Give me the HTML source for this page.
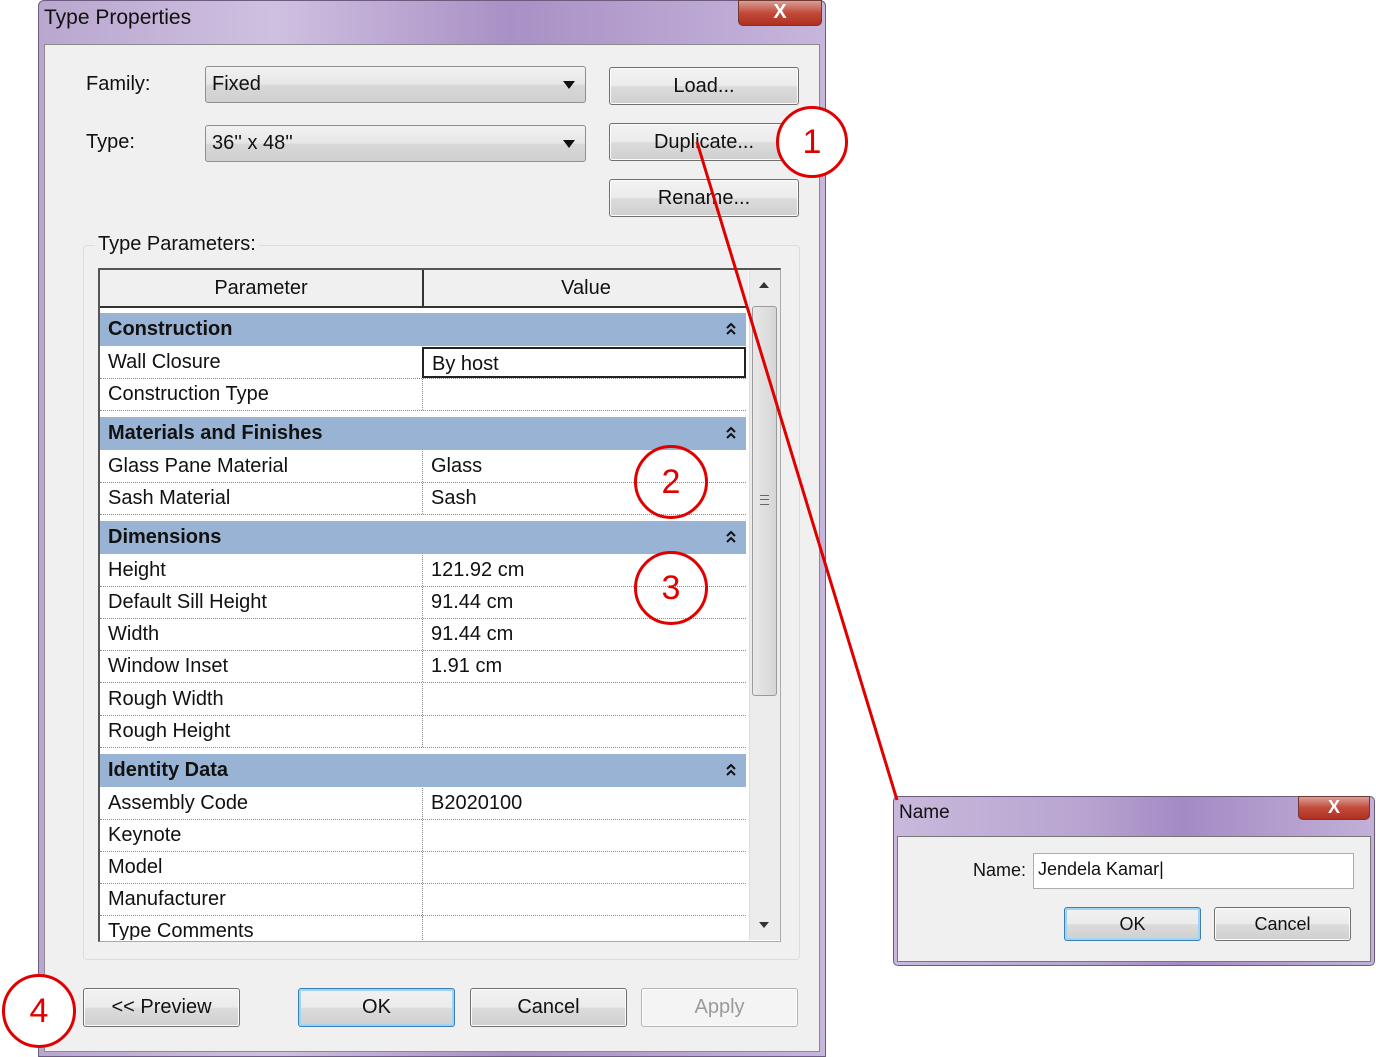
<!DOCTYPE html>
<html><head><meta charset="utf-8"><style>
*{margin:0;padding:0;box-sizing:border-box}
body{width:1376px;height:1057px;background:#fff;position:relative;overflow:hidden;font-family:"Liberation Sans Narrow","Liberation Sans",sans-serif;color:#111}
.a{position:absolute}
.t{font-size:20px;white-space:nowrap}
.btn{position:absolute;border:1px solid #707070;border-radius:3px;background:linear-gradient(#f2f2f2,#ebebeb 50%,#dcdcdc 51%,#cfcfcf);font-size:20px;text-align:center;box-shadow:inset 0 0 0 1px #fcfcfc}
.combo{position:absolute;border:1px solid #8e8f8f;border-radius:3px;background:linear-gradient(#f2f2f2,#e6e6e6 50%,#d8d8d8 51%,#d0d0d0);font-size:20px;padding-left:6px}
.combo:after{content:"";position:absolute;right:10px;top:14px;border-left:6px solid transparent;border-right:6px solid transparent;border-top:8px solid #111}
.circ{position:absolute;border:3px solid #e00000;border-radius:50%;background:#fff;color:#e00000;font-size:34px;text-align:center}
.grp{position:absolute;left:100px;width:646px;height:33px;background:#98b3d3;font-weight:bold;font-size:20px;padding-left:8px;line-height:33px}
.grp svg{position:absolute;right:10px;top:9px}
.row{position:absolute;left:100px;width:646px;height:32px;border-bottom:1px dotted #888;font-size:20px;line-height:31px}
.row span{position:absolute;left:8px}
.row b{position:absolute;left:322px;top:0;bottom:0;border-left:1px dotted #888;font-weight:normal;padding-left:8px}
</style></head><body>
<div class="a" style="left:38px;top:0;width:788px;height:1057px;background:linear-gradient(90deg,#b9a7cf,#cfc0e0 30%,#a990c5 60%,#c7b6dc);border:1px solid #6b5c80;border-radius:6px 6px 0 0"></div>
<div class="a t" style="left:44px;top:6px;font-size:21px">Type Properties</div>
<div class="a" style="left:738px;top:0;width:84px;height:26px;background:linear-gradient(#d99f96,#c24a3a 50%,#b03020);border:1px solid #6e3a32;border-radius:0 0 5px 5px;color:#fff;font-weight:bold;font-size:20px;text-align:center;line-height:22px">X</div>
<div class="a" style="left:44px;top:44px;width:776px;height:1008px;background:#f0f0f0;border:1px solid #8a8a8a"></div>

<div class="a t" style="left:86px;top:73px">Family:</div>
<div class="a t" style="left:86px;top:131px">Type:</div>
<div class="combo" style="left:205px;top:66px;width:381px;height:37px;line-height:35px">Fixed</div>
<div class="combo" style="left:205px;top:125px;width:381px;height:37px;line-height:35px">36'' x 48''</div>
<div class="btn" style="left:609px;top:67px;width:190px;height:38px;line-height:36px">Load...</div>
<div class="btn" style="left:609px;top:123px;width:190px;height:38px;line-height:36px">Duplicate...</div>
<div class="btn" style="left:609px;top:179px;width:190px;height:38px;line-height:36px">Rename...</div>

<div class="a" style="left:83px;top:245px;width:717px;height:715px;border:1px solid #dcdcdc;border-radius:4px"></div>
<div class="a t" style="left:95px;top:233px;background:#f0f0f0;padding:0 3px">Type Parameters:</div>

<div class="a" style="left:98px;top:268px;width:683px;height:674px;background:#fff;border:2px solid #555;border-right:1px solid #aaa;border-bottom:1px solid #aaa"></div>
<div class="a" style="left:100px;top:270px;width:648px;height:38px;background:#f0f0f0;border-bottom:2px solid #333"></div>
<div class="a" style="left:422px;top:270px;width:2px;height:38px;background:#333"></div>
<div class="a t" style="left:100px;top:277px;width:322px;text-align:center">Parameter</div>
<div class="a t" style="left:424px;top:277px;width:324px;text-align:center">Value</div>
<div class="a" style="left:749px;top:270px;width:31px;height:670px;background:#ececec;border-left:1px solid #ddd"></div>
<div class="a" style="left:752px;top:306px;width:25px;height:390px;background:linear-gradient(90deg,#e8e8e8,#d6d6d6);border:1px solid #9a9a9a;border-radius:3px"></div>
<div class="a" style="left:759px;top:282px;border-left:5px solid transparent;border-right:5px solid transparent;border-bottom:6px solid #333"></div>
<div class="a" style="left:759px;top:922px;border-left:5px solid transparent;border-right:5px solid transparent;border-top:6px solid #333"></div>
<div class="a" style="left:760px;top:495px;width:9px;height:10px;border-top:1px solid #666;border-bottom:1px solid #666"></div>
<div class="a" style="left:760px;top:499px;width:9px;height:1px;background:#666"></div>

<div class="grp" style="top:313px">Construction<svg width="10" height="14"><path d="M1 6L5 2L9 6M1 12L5 8L9 12" fill="none" stroke="#111" stroke-width="2"/></svg></div>
<div class="row" style="top:347px"><span>Wall Closure</span><b style="border:2px solid #222;right:0;background:#fff">By host</b></div>
<div class="row" style="top:379px"><span>Construction Type</span><b></b></div>
<div class="grp" style="top:417px">Materials and Finishes<svg width="10" height="14"><path d="M1 6L5 2L9 6M1 12L5 8L9 12" fill="none" stroke="#111" stroke-width="2"/></svg></div>
<div class="row" style="top:451px"><span>Glass Pane Material</span><b>Glass</b></div>
<div class="row" style="top:483px"><span>Sash Material</span><b>Sash</b></div>
<div class="grp" style="top:521px">Dimensions<svg width="10" height="14"><path d="M1 6L5 2L9 6M1 12L5 8L9 12" fill="none" stroke="#111" stroke-width="2"/></svg></div>
<div class="row" style="top:555px"><span>Height</span><b>121.92 cm</b></div>
<div class="row" style="top:587px"><span>Default Sill Height</span><b>91.44 cm</b></div>
<div class="row" style="top:619px"><span>Width</span><b>91.44 cm</b></div>
<div class="row" style="top:651px"><span>Window Inset</span><b>1.91 cm</b></div>
<div class="row" style="top:684px"><span>Rough Width</span><b></b></div>
<div class="row" style="top:716px"><span>Rough Height</span><b></b></div>
<div class="grp" style="top:754px">Identity Data<svg width="10" height="14"><path d="M1 6L5 2L9 6M1 12L5 8L9 12" fill="none" stroke="#111" stroke-width="2"/></svg></div>
<div class="row" style="top:788px"><span>Assembly Code</span><b>B2020100</b></div>
<div class="row" style="top:820px"><span>Keynote</span><b></b></div>
<div class="row" style="top:852px"><span>Model</span><b></b></div>
<div class="row" style="top:884px"><span>Manufacturer</span><b></b></div>
<div class="row" style="top:916px;height:24px;overflow:hidden;border:0"><span>Type Comments</span><b></b></div>

<div class="btn" style="left:83px;top:988px;width:157px;height:39px;line-height:37px">&lt;&lt; Preview</div>
<div class="btn" style="left:298px;top:988px;width:157px;height:39px;line-height:37px;border-color:#3c7fb1;box-shadow:inset 0 0 0 2px #9fd4f4">OK</div>
<div class="btn" style="left:470px;top:988px;width:157px;height:39px;line-height:37px">Cancel</div>
<div class="btn" style="left:641px;top:988px;width:157px;height:39px;line-height:37px;color:#9a9a9a;border-color:#b5b5b5;background:#f4f4f4">Apply</div>

<div class="a" style="left:893px;top:796px;width:482px;height:170px;background:linear-gradient(90deg,#c8b9dc,#b8a4d0 40%,#a48ac4 60%,#c2b0d8);border:1px solid #6b5c80;border-radius:5px"></div>
<div class="a t" style="left:899px;top:802px;font-size:19px">Name</div>
<div class="a" style="left:1298px;top:796px;width:72px;height:24px;background:linear-gradient(#d99f96,#c24a3a 50%,#b03020);border:1px solid #6e3a32;border-radius:0 0 5px 5px;color:#fff;font-weight:bold;font-size:18px;text-align:center;line-height:20px">X</div>
<div class="a" style="left:897px;top:836px;width:474px;height:126px;background:#f0f0f0;border:1px solid #777"></div>
<div class="a t" style="left:973px;top:860px;font-size:18px">Name:</div>
<div class="a" style="left:1033px;top:853px;width:321px;height:36px;background:#fff;border:1px solid #abadb3;font-size:18px;padding:5px 4px">Jendela Kamar|</div>
<div class="btn" style="left:1064px;top:907px;width:137px;height:34px;line-height:32px;font-size:18px;border-color:#3c7fb1;box-shadow:inset 0 0 0 2px #9fd4f4">OK</div>
<div class="btn" style="left:1214px;top:907px;width:137px;height:34px;line-height:32px;font-size:18px">Cancel</div>

<div class="circ" style="left:776px;top:106px;width:72px;height:72px;line-height:66px">1</div>
<div class="circ" style="left:634px;top:445px;width:74px;height:74px;line-height:68px;background:transparent">2</div>
<div class="circ" style="left:634px;top:551px;width:74px;height:74px;line-height:68px;background:transparent">3</div>
<div class="circ" style="left:2px;top:974px;width:74px;height:74px;line-height:68px">4</div>
<svg class="a" style="left:0;top:0" width="1376" height="1057"><line x1="697" y1="142" x2="897" y2="800" stroke="#e00000" stroke-width="3"/></svg>
</body></html>
